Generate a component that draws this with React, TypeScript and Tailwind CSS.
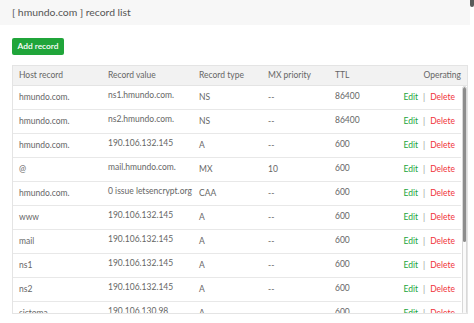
const rows = [
  { host: 'hmundo.com.', value: 'ns1.hmundo.com.', type: 'NS', mx: '--', ttl: '86400' },
  { host: 'hmundo.com.', value: 'ns2.hmundo.com.', type: 'NS', mx: '--', ttl: '86400' },
  { host: 'hmundo.com.', value: '190.106.132.145', type: 'A', mx: '--', ttl: '600' },
  { host: '@', value: 'mail.hmundo.com.', type: 'MX', mx: '10', ttl: '600' },
  { host: 'hmundo.com.', value: '0 issue letsencrypt.org', type: 'CAA', mx: '--', ttl: '600' },
  { host: 'www', value: '190.106.132.145', type: 'A', mx: '--', ttl: '600' },
  { host: 'mail', value: '190.106.132.145', type: 'A', mx: '--', ttl: '600' },
  { host: 'ns1', value: '190.106.132.145', type: 'A', mx: '--', ttl: '600' },
  { host: 'ns2', value: '190.106.132.145', type: 'A', mx: '--', ttl: '600' },
  { host: 'sictoma', value: '190.106.130.98', type: 'A', mx: '--', ttl: '600' },
]

const cols = 'grid grid-cols-[89px_91px_69px_67px_1fr_auto] items-center whitespace-nowrap'

export default function App() {
  return (
    <div
      className="relative w-[474px] h-[323px] overflow-hidden bg-white text-[#666]"
      style={{ fontFamily: 'Lato, "Open Sans", sans-serif' }}
    >
      <div className="absolute top-0 right-0 w-[4px] h-[7px] rounded-b-sm bg-[#5a5a5a]" />
      <div className="h-[25px] w-[470px] bg-[#f7f7f7] pl-[12px] flex items-center text-[10.4px] text-[#555]">
        [ hmundo.com ] record list
      </div>
      <div className="pl-[12px] pt-[13px]">
        <button className="h-[17px] w-[52px] rounded-[2px] bg-[#20a53a] text-white text-[8.4px] font-semibold flex items-center justify-center">
          Add record
        </button>
        <div className="mt-[10px] w-[456px] h-[249px] border border-[#e4e4e4] overflow-hidden text-[8.5px]">
          <div className={`${cols} h-[20px] bg-[#f2f2f2] border-b border-[#e4e4e4] text-[#666]`}>
            <div className="px-[6px]">Host record</div>
            <div className="px-[6px]">Record value</div>
            <div className="px-[6px]">Record type</div>
            <div className="px-[6px]">MX priority</div>
            <div className="px-[6px]">TTL</div>
            <div className="px-[6px] text-right">Operating</div>
          </div>
          <div className="flex">
            <div className="w-[449px]">
              {rows.map((r, i) => (
                <div key={i} className={`${cols} h-[24px] border-b border-[#e8e8e8]`}>
                  <div className="px-[6px]">{r.host}</div>
                  <div className="px-[6px] -translate-y-[2px]">{r.value}</div>
                  <div className="px-[6px]">{r.type}</div>
                  <div className="px-[6px]">{r.mx}</div>
                  <div className="px-[6px] -translate-y-[1px]">{r.ttl}</div>
                  <div className="px-[6px] flex items-center">
                    <span className="text-[#20a53a]">Edit</span>
                    <span className="mx-[5px] text-[#999]">|</span>
                    <span className="text-[#f0333a]">Delete</span>
                  </div>
                </div>
              ))}
            </div>
            <div className="ml-[1px] w-[5px] h-[229px] rounded-[3px] border border-[#d8d8d8] bg-[#fafafa] overflow-hidden">
              <div className="h-[155px] rounded-[3px] bg-[#8d8d8d]" />
            </div>
          </div>
        </div>
      </div>
    </div>
  )
}
